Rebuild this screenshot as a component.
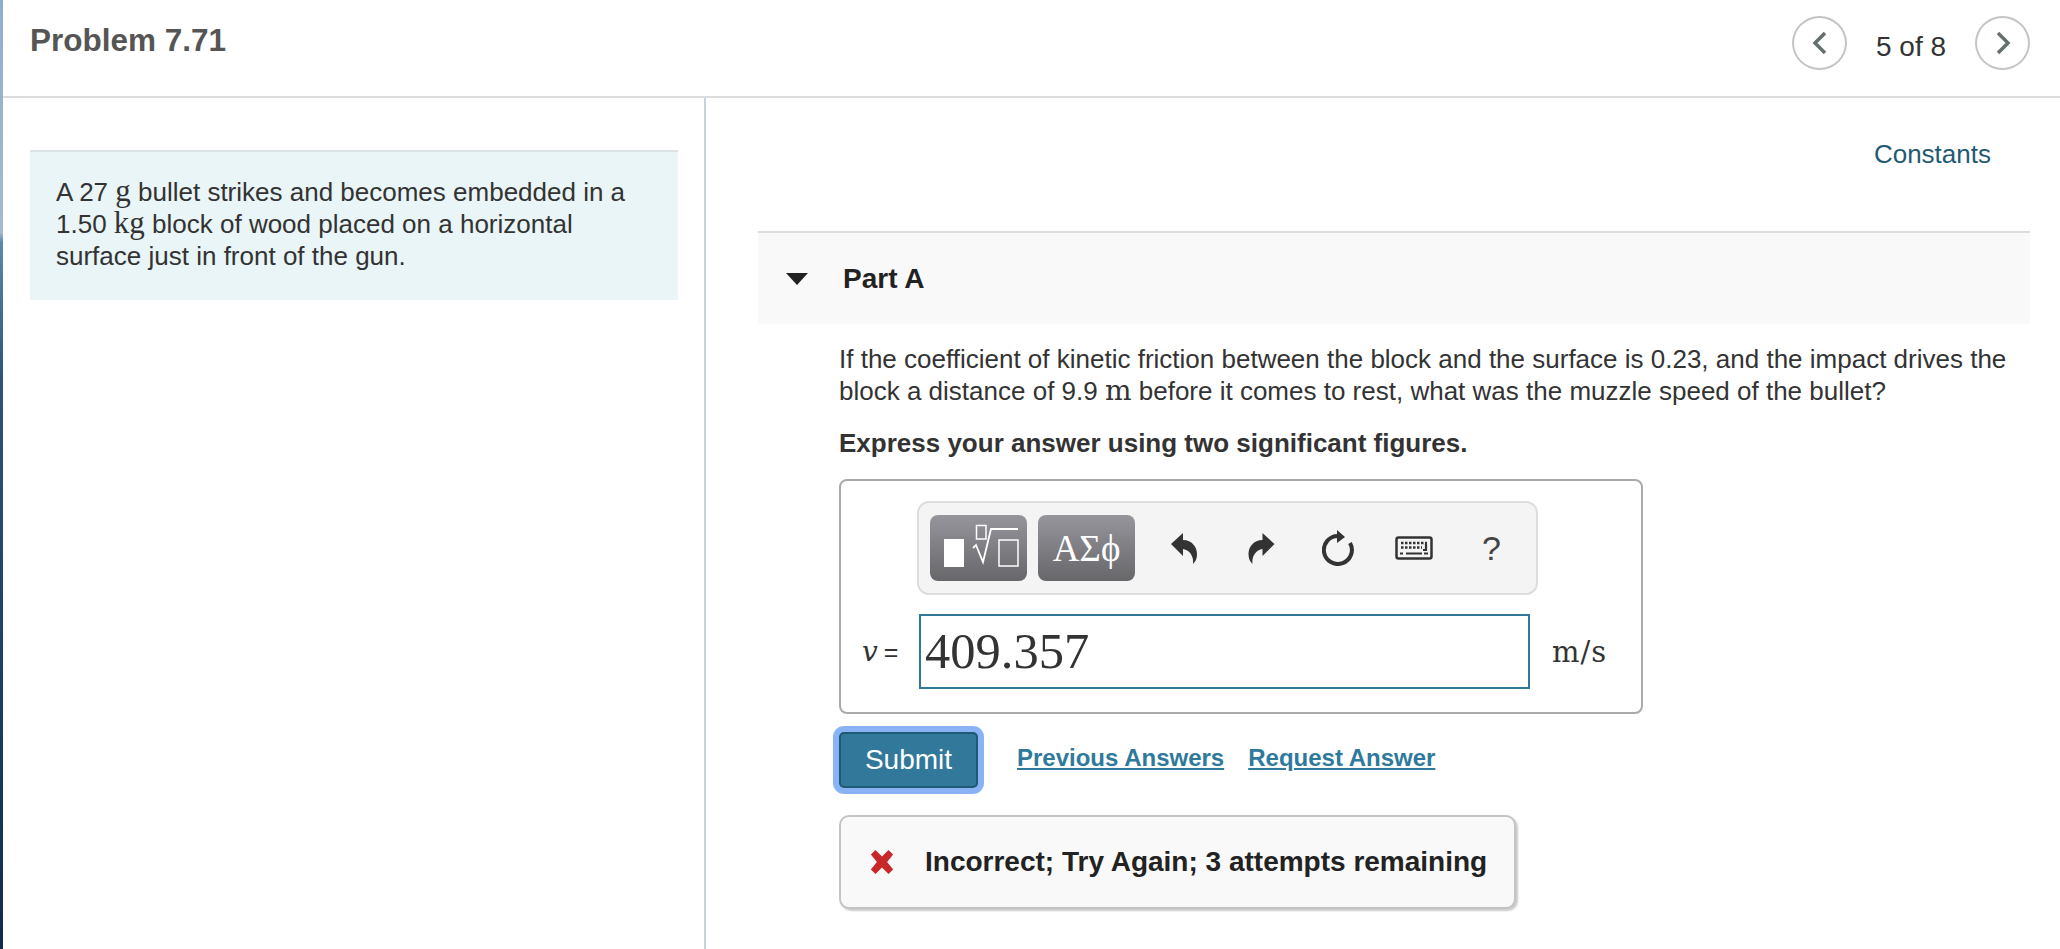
<div class="strip"></div>
<div class="page">
	<header class="top">
		<h1>Problem 7.71</h1>
		<nav class="pager">
			<button class="round" aria-label="Previous">
				<svg width="20" height="24" viewBox="0 0 20 24"><path d="M15 2 L5 12 L15 22" fill="none" stroke="#64706f" stroke-width="3.5" /></svg>
			</button>
			<span class="count">5 of 8</span>
			<button class="round" aria-label="Next">
				<svg width="20" height="24" viewBox="0 0 20 24"><path d="M5 2 L15 12 L5 22" fill="none" stroke="#64706f" stroke-width="3.5" /></svg>
			</button>
		</nav>
	</header>

	<div class="columns">
		<aside class="left">
			<div class="intro">
				A 27 <span class="math">g</span> bullet strikes and becomes embedded in a
				<br />1.50 <span class="math">kg</span> block of wood placed on a horizontal
				<br />surface just in front of the gun.
			</div>
		</aside>

		<main class="right">
			<div class="constants"><a href="#c">Constants</a></div>

			<section class="part-head">
				<span class="tri"></span>
				<h2>Part A</h2>
			</section>

			<div class="part-body">
				<p class="question">
					If the coefficient of kinetic friction between the block and the surface is 0.23, and the impact drives the
					<br />block a distance of 9.9 <span class="math-m">m</span> before it comes to rest, what was the muzzle speed of the bullet?
				</p>
				<p class="express">Express your answer using two significant figures.</p>

				<div class="answer">
					<div class="toolbar">
						<button class="tool" aria-label="Templates">
							<svg width="97" height="66" viewBox="0 0 97 66">
								<rect x="14" y="24" width="20" height="28" fill="#fff" />
								<rect x="46.500" y="10.500" width="9.500" height="13.500" fill="none" stroke="#fff" stroke-width="1.500" />
								<path d="M43 33 L46 30 L53 47 L61 14 L88 14" fill="none" stroke="#fff" stroke-width="1.800" />
								<rect x="69" y="25" width="19" height="26" fill="none" stroke="#fff" stroke-width="1.500" />
							</svg>
						</button>
						<button class="tool greek">ΑΣϕ</button>
						<button class="icon undo" aria-label="Undo">
							<svg width="26" height="31" viewBox="0 0 26 31">
								<path d="M0 11 L12 0 V7 C21 7 26 14 26 21 C26 25 25 28 22 31 C23 24 19 17 12 16 V23 Z" fill="#333" />
							</svg>
						</button>
						<button class="icon redo" aria-label="Redo">
							<svg width="27" height="31" viewBox="0 0 26 31">
								<path d="M26 11 L14 0 V7 C5 7 0 14 0 21 C0 25 1 28 4 31 C3 24 7 17 14 16 V23 Z" fill="#333" />
							</svg>
						</button>
						<button class="icon reset" aria-label="Reset">
							<svg width="32" height="36" viewBox="0 0 32 36">
								<path d="M16 6 A14 14 0 1 0 28 13" fill="none" stroke="#333" stroke-width="4" />
								<path d="M15 0 L23 7 L15 13 Z" fill="#333" />
							</svg>
						</button>
						<button class="icon keys" aria-label="Keyboard">
							<svg width="38" height="24" viewBox="0 0 38 24">
								<rect x="1.500" y="1.500" width="35" height="21" rx="2" fill="#f4f4f4" stroke="#333" stroke-width="2.500" />
								<path d="M6 7 H32 M6 11.500 H27" stroke="#333" stroke-width="2.500" stroke-dasharray="2.500 1.500" fill="none" />
								<path d="M31 8 V14 H28 M11 17.500 H27 M5 17.500 H8 M29 17.500 H33" stroke="#333" stroke-width="2.200" fill="none" />
							</svg>
						</button>
						<button class="icon help">?</button>
					</div>

					<div class="entry">
						<span class="var"><i>v</i><span class="eq">=</span></span>
						<div class="field">409.357</div>
						<span class="unit">m/s</span>
					</div>
				</div>

				<div class="actions">
					<button class="submit">Submit</button>
					<a href="#p">Previous Answers</a>
					<a href="#r">Request Answer</a>
				</div>

				<div class="feedback">
					<svg width="28" height="26" viewBox="0 0 30 28">
						<path d="M3 6 L8 1 L15 8 L22 1 L27 6 L20.500 14 L27 22 L22 27 L15 20 L8 27 L3 22 L9.500 14 Z" fill="#c9282b" />
					</svg>
					<strong>Incorrect; Try Again; 3 attempts remaining</strong>
				</div>
			</div>
		</main>
	</div>
</div>

<style>
	:global(body) {
		margin: 0;
		background: #fff;
		font-family: "Liberation Sans", Arial, sans-serif;
		color: #333;
		overflow: hidden;
	}
	* {
		box-sizing: border-box;
	}
	button {
		font-family: inherit;
		padding: 0;
		border: 0;
		background: none;
	}
	.strip {
		position: fixed;
		left: 0;
		top: 0;
		bottom: 0;
		width: 3px;
		background: linear-gradient(#8eafcc 0, #a3bbd0 24.500%, #5b88b3 25.500%, #2d5379 40%, #1e3f66 70%, #0d2b4e 100%);
	}
	.page {
		margin-left: 3px;
		height: 949px;
		display: flex;
		flex-direction: column;
	}
	.top {
		height: 98px;
		flex: none;
		border-bottom: 2px solid #ddd;
		display: flex;
		justify-content: space-between;
		align-items: flex-start;
		padding: 0 30px 0 27px;
	}
	h1 {
		margin: 22px 0 0;
		font-size: 31.500px;
		line-height: 36px;
		color: #555;
	}
	.pager {
		display: flex;
		align-items: center;
		margin-top: 16px;
	}
	.round {
		width: 55px;
		height: 54px;
		border: 2px solid #c4c4c4;
		border-radius: 50%;
		background: #fff;
		display: flex;
		align-items: center;
		justify-content: center;
	}
	.count {
		width: 128px;
		text-align: center;
		font-size: 28px;
		color: #333;
		padding-top: 8px;
	}
	.columns {
		flex: 1;
		display: flex;
		min-height: 0;
	}
	.left {
		width: 703px;
		flex: none;
		border-right: 2px solid #c6d3de;
		padding: 52px 26px 0 27px;
	}
	.intro {
		height: 150px;
		background: #e9f5f7;
		border-top: 2px solid #dde3e4;
		padding: 24px 20px 0 26px;
		font-size: 26px;
		line-height: 32px;
		color: #333;
		white-space: nowrap;
	}
	.math {
		font-family: "Liberation Serif", serif;
		font-size: 31px;
		line-height: 20px;
	}
	.math-m {
		font-family: "DejaVu Serif", serif;
		font-size: 28px;
		line-height: 20px;
	}
	.right {
		flex: 1;
		padding: 0 30px 0 52px;
		min-width: 0;
	}
	.constants {
		text-align: right;
		padding: 40px 39px 0 0;
		height: 133px;
		font-size: 26px;
		line-height: 32px;
	}
	.constants a {
		color: #1f5a75;
		text-decoration: none;
	}
	.part-head {
		height: 93px;
		background: #f9f9f9;
		border-top: 2px solid #ddd;
		display: flex;
		align-items: center;
		padding-left: 28px;
	}
	.tri {
		width: 0;
		height: 0;
		border-left: 11px solid transparent;
		border-right: 11px solid transparent;
		border-top: 12px solid #222;
		margin-right: 35px;
	}
	h2 {
		margin: 0;
		font-size: 28px;
		color: #222;
	}
	.part-body {
		padding: 0 0 0 81px;
	}
	.question {
		margin: 19px 0 0;
		font-size: 26px;
		line-height: 32px;
		white-space: nowrap;
	}
	.express {
		margin: 20px 0 0;
		font-size: 26px;
		line-height: 32px;
		font-weight: 700;
	}
	.answer {
		margin-top: 20px;
		width: 804px;
		height: 235px;
		border: 2px solid #aaa;
		border-radius: 8px;
		padding: 20px 0 0 76px;
	}
	.toolbar {
		width: 621px;
		height: 94px;
		background: #f4f4f4;
		border: 2px solid #ddd;
		border-radius: 12px;
		display: flex;
		align-items: center;
		padding-left: 11px;
	}
	.tool {
		width: 97px;
		height: 66px;
		flex: none;
		border-radius: 8px;
		background: linear-gradient(#96959c, #67676a);
		color: #fff;
		display: flex;
		align-items: center;
		justify-content: center;
		margin-right: 11px;
	}
	.greek {
		font-family: "Liberation Serif", serif;
		font-size: 37px;
		margin-right: 0;
	}
	.icon {
		display: flex;
		align-items: center;
		justify-content: center;
		color: #333;
		flex: none;
	}
	.undo {
		margin-left: 36px;
	}
	.redo {
		margin-left: 51px;
	}
	.reset {
		margin-left: 47px;
	}
	.keys {
		margin-left: 41px;
	}
	.help {
		margin-left: 49px;
		font-size: 34px;
		color: #444;
	}
	.entry {
		display: flex;
		align-items: center;
		margin-top: 19px;
		margin-left: -55px;
	}
	.var {
		width: 57px;
		display: flex;
		align-items: baseline;
		font-family: "DejaVu Serif", serif;
		font-size: 28px;
	}
	.eq {
		margin-left: 6px;
		font-family: "Liberation Sans", sans-serif;
		font-size: 25px;
	}
	.field {
		width: 611px;
		height: 75px;
		border: 2px solid #31789a;
		padding-left: 4px;
		font-family: "Liberation Serif", serif;
		font-size: 50.500px;
		line-height: 71px;
		color: #333;
	}
	.unit {
		margin-left: 22px;
		font-family: "DejaVu Serif", serif;
		font-size: 29px;
		letter-spacing: 1px;
	}
	.actions {
		display: flex;
		align-items: center;
		margin-top: 18px;
	}
	.submit {
		width: 139px;
		height: 56px;
		background: #31789a;
		border: 2px solid #1f5a75;
		border-radius: 5px;
		box-shadow: 0 0 0 6px #8ab3f5;
		color: #fff;
		font-size: 28px;
		margin-right: 39px;
	}
	.actions a {
		color: #2f7a9c;
		font-size: 24px;
		font-weight: 700;
		margin-right: 24px;
		margin-bottom: 4px;
	}
	.feedback {
		margin-top: 27px;
		width: 677px;
		height: 94px;
		background: #f9f9f9;
		border: 2px solid #c4c4c4;
		border-radius: 10px;
		box-shadow: 2px 2px 2px #ccc;
		display: flex;
		align-items: center;
		padding-left: 27px;
		font-size: 28px;
		color: #222;
	}
	.feedback strong {
		margin-left: 29px;
		white-space: nowrap;
	}
</style>
